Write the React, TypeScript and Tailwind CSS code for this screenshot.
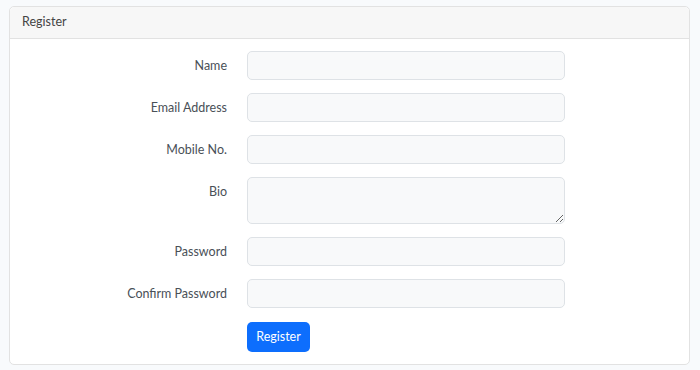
import React from 'react';

const FIELDS = [
  { label: 'Name', type: 'text' },
  { label: 'Email Address', type: 'email' },
  { label: 'Mobile No.', type: 'text' },
  { label: 'Bio', type: 'textarea' },
  { label: 'Password', type: 'password' },
  { label: 'Confirm Password', type: 'password' },
];

export default function App() {
  return (
    <div className="min-h-[370px] w-[700px] bg-[#f8fafc] pt-[6px] pl-[9px] font-['Lato','Open_Sans',sans-serif] text-[12px] text-[#495057]">
      <div className="w-[681px] rounded-[5px] border border-[#e2e2e2] bg-white">
        <div className="flex h-[32px] items-center border-b border-[#e2e2e2] bg-[#f7f7f7] px-[12px] text-[12.5px] text-[#444] rounded-t-[5px]">
          Register
        </div>
        <div className="flex flex-col gap-[13px] pt-[12px] pb-[12px]">
          {FIELDS.map(field => (
            <div key={field.label} className="flex gap-[20px]">
              <label
                className={`w-[217px] text-right text-[12.5px] ${field.type === 'textarea' ? 'pt-[6px]' : 'leading-[29px]'}`}
              >
                {field.label}
              </label>
              {field.type === 'textarea' ? (
                <textarea className="h-[47px] w-[318px] rounded-[5px] border border-[#dee2e6] bg-[#f8f9fa] px-[10px] py-[5px] outline-none" />
              ) : (
                <input
                  type={field.type}
                  className="h-[29px] w-[318px] rounded-[5px] border border-[#dee2e6] bg-[#f8f9fa] px-[10px] outline-none"
                />
              )}
            </div>
          ))}
          <div className="mt-[1px] flex gap-[20px]">
            <div className="w-[217px]" />
            <button className="h-[30px] w-[63px] rounded-[5px] bg-[#0d6efd] text-[12.5px] text-white">
              Register
            </button>
          </div>
        </div>
      </div>
    </div>
  );
}
